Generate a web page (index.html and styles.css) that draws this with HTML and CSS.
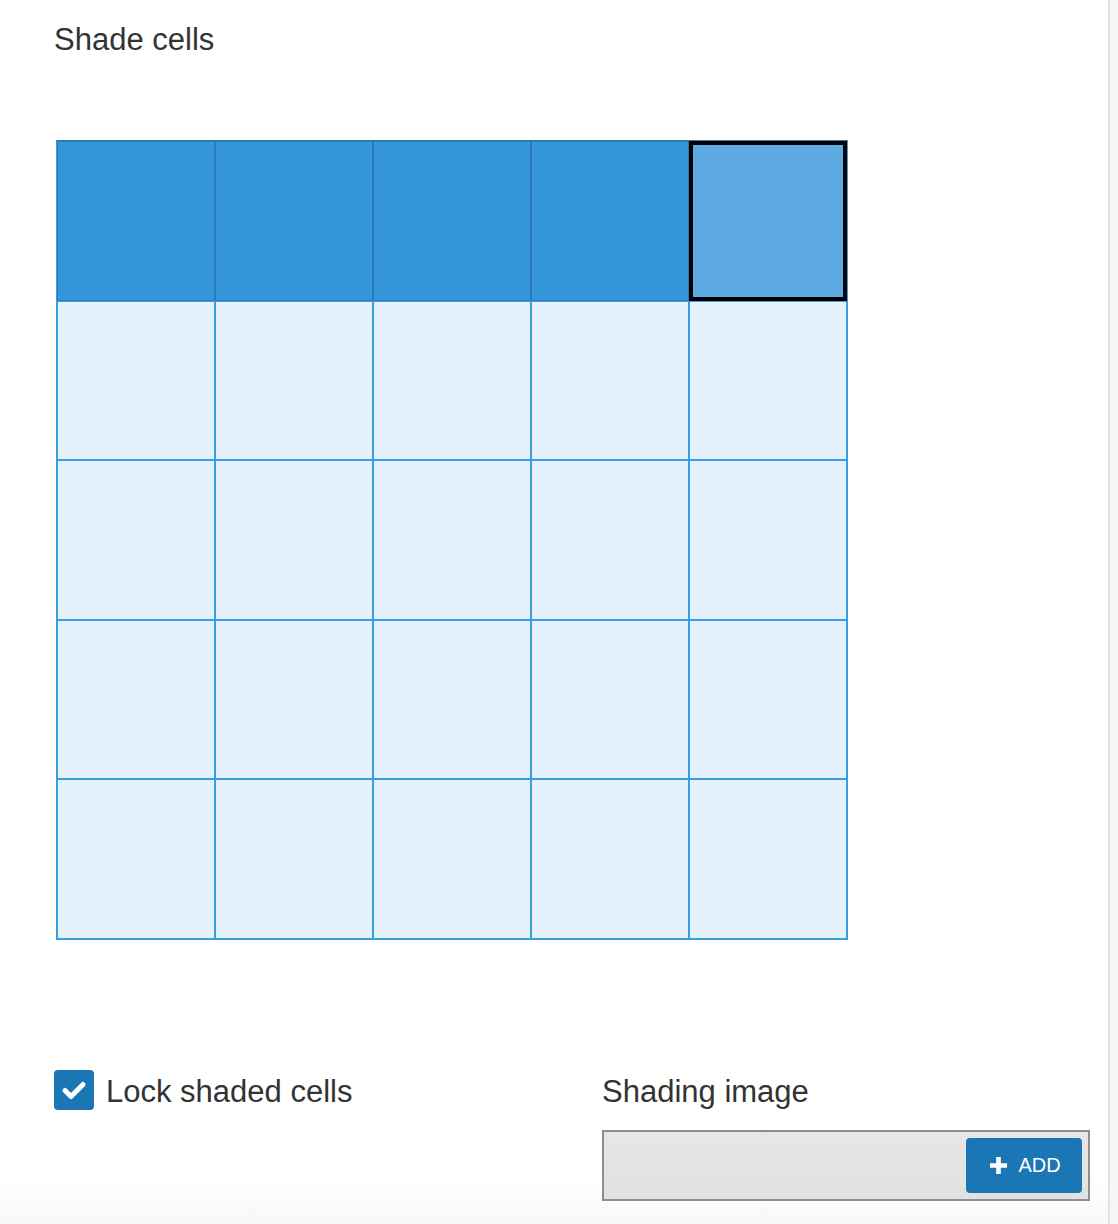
FILE: index.html
```html
<!DOCTYPE html>
<html lang="en">
<head>
<meta charset="utf-8">
<title>Shade cells</title>
<link rel="stylesheet" href="styles.css">
</head>
<body>
<div class="page">
  <main class="panel">
    <h2 class="title">Shade cells</h2>
    <div class="grid">
      <div class="cell shaded"></div>
      <div class="cell shaded"></div>
      <div class="cell shaded"></div>
      <div class="cell shaded"></div>
      <div class="cell shaded selected"></div>
      <div class="cell"></div><div class="cell"></div><div class="cell"></div><div class="cell"></div><div class="cell"></div>
      <div class="cell"></div><div class="cell"></div><div class="cell"></div><div class="cell"></div><div class="cell"></div>
      <div class="cell"></div><div class="cell"></div><div class="cell"></div><div class="cell"></div><div class="cell"></div>
      <div class="cell"></div><div class="cell"></div><div class="cell"></div><div class="cell"></div><div class="cell"></div>
    </div>
    <div class="options">
      <label class="lock">
        <span class="checkbox">
          <svg viewBox="0 0 40 40" width="40" height="40"><path d="M11 20.5 L17 26.5 L29 14.5" fill="none" stroke="#fff" stroke-width="5" stroke-linecap="round" stroke-linejoin="round"/></svg>
        </span>
        <span class="lock-text">Lock shaded cells</span>
      </label>
      <div class="image-field">
        <div class="field-label">Shading image</div>
        <div class="field-box">
          <button class="add-btn" type="button">
            <svg viewBox="0 0 19 19" width="19" height="19"><path d="M9.5 1 V18 M1 9.5 H18" stroke="#fff" stroke-width="4.6" stroke-linecap="butt"/></svg>
            <span>ADD</span>
          </button>
        </div>
      </div>
    </div>
  </main>
  <div class="side"></div>
</div>
</body>
</html>
```
FILE: styles.css
```css
* { box-sizing: border-box; }
html, body { margin: 0; padding: 0; }
body {
  background: #f6f6f6;
  font-family: "Liberation Sans", Arial, Helvetica, sans-serif;
  color: #333;
}
.page {
  display: flex;
  width: 1118px;
  height: 1224px;
  overflow: hidden;
}
.panel {
  width: 1110px;
  flex: none;
  background: linear-gradient(to bottom, #fff 0, #fff 1180px, #f7f7f7 1224px);
  border-right: 2px solid #e3e3e3;
  padding: 22px 0 0 54px;
}
.side { flex: 1; background: #f6f6f6; }
.title {
  margin: 0;
  font-size: 31px;
  line-height: 36px;
  font-weight: normal;
  color: #333;
}
.grid {
  margin: 82px 0 0 2px;
  width: 792px;
  height: 800px;
  display: grid;
  grid-template-columns: repeat(5, 1fr);
  grid-template-rows: repeat(5, 1fr);
  border: 1px solid #3a9de0;
  border-top-color: #2a7bb5;
}
.cell {
  background: #e6f2fb;
  border: 1px solid #3a9de0;
}
.cell.shaded {
  background: #3597db;
  border-color: #2a7bb5;
}
.cell.selected {
  background: #5dabe2;
  border-color: #000;
  box-shadow: inset 0 0 0 3px #000;
}
.options {
  margin-top: 130px;
  display: flex;
  align-items: flex-start;
}
.lock {
  width: 548px;
  display: flex;
  align-items: center;
  gap: 12px;
}
.checkbox {
  width: 40px;
  height: 40px;
  border-radius: 4px;
  background: #1a76b4;
  display: flex;
}
.lock-text, .field-label {
  font-size: 31px;
  line-height: 36px;
  color: #333;
}
.lock-text { padding-top: 3px; }
.image-field {
  width: 488px;
  padding-top: 4px;
}
.field-label { margin-bottom: 20px; }
.field-box {
  height: 71px;
  border: 2px solid #8e8e8e;
  background: linear-gradient(to bottom, #e6e6e6, #e1e1e1);
  padding: 6px;
  display: flex;
  justify-content: flex-end;
}
.add-btn {
  width: 116px;
  height: 55px;
  border: none;
  border-radius: 4px;
  background: #1a76b4;
  color: #fff;
  font-family: "Liberation Sans", Arial, Helvetica, sans-serif;
  font-size: 20px;
  display: flex;
  align-items: center;
  justify-content: center;
  gap: 10px;
  padding: 0 0 0 2px;
}
.add-btn svg { display: block; }
```
